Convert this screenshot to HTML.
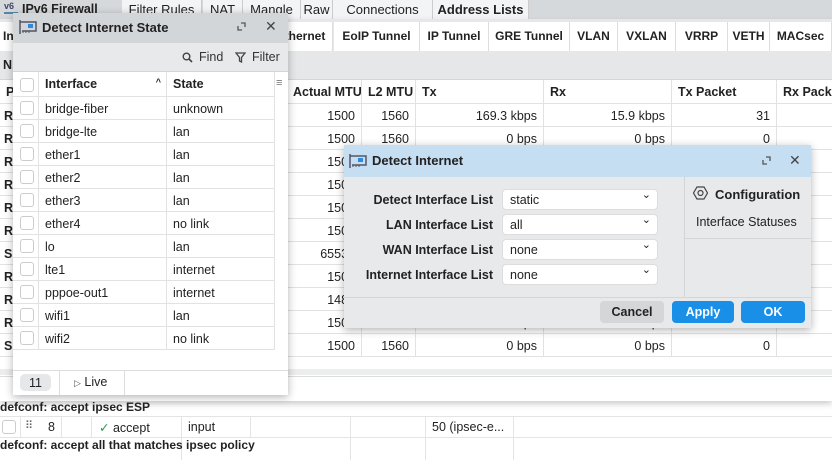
<!DOCTYPE html>
<html><head><meta charset="utf-8"><style>
*{box-sizing:border-box;margin:0;padding:0}
body{width:832px;height:460px;overflow:hidden;background:#fff;font-family:"Liberation Sans",sans-serif;font-size:12.5px;color:#222;position:relative}
.a{position:absolute}
.tab{position:absolute;top:0;height:19px;background:#f3f4f5;border-right:1px solid #ccc;padding:2px 0 0 0;text-align:center;font-size:13px}
.t2{position:absolute;top:22px;height:29px;background:#fff;border-right:1px solid #ddd;text-align:center;padding-top:7px;font-weight:bold;font-size:12px}
.cell{position:absolute;height:23px;border-right:1px solid #e2e2e2;border-bottom:1px solid #e2e2e2;padding:5px 6px 0;text-align:right;white-space:nowrap;overflow:hidden}
.hd{font-weight:bold;text-align:left;background:#fff;height:24px}
.cb{position:absolute;width:14px;height:14px;border:1px solid #ccc;border-radius:3px;background:#fff}
.sel{position:absolute;left:502px;width:156px;height:21px;background:#fff;border:1px solid #ddd;border-radius:4px;padding:3px 7px;font-size:12.5px}
.sel:after{content:"⌄";position:absolute;right:6px;top:-2px;font-size:11px}
.lbl{position:absolute;right:339px;font-weight:bold;font-size:12.5px;text-align:right}
.btn{position:absolute;top:301px;height:22px;border-radius:4px;font-weight:bold;text-align:center;padding-top:4px;font-size:12.5px}
</style></head><body>
<div class="a" style="left:0;top:0;width:832px;height:19px;background:#d6d9dc"></div>
<div class="a" style="left:4px;top:1px;font-size:9px;font-weight:bold;color:#446">v6</div>
<div class="a" style="left:4px;top:12px;width:14px;height:2px;background:#58a"></div>
<div class="a" style="left:22px;top:2px;font-weight:bold">IPv6 Firewall</div>
<div class="tab" style="left:122px;width:80px">Filter Rules</div>
<div class="tab" style="left:203px;width:40px">NAT</div>
<div class="tab" style="left:243px;width:58px">Mangle</div>
<div class="tab" style="left:301px;width:32px">Raw</div>
<div class="tab" style="left:333px;width:100px">Connections</div>
<div class="tab" style="left:433px;width:96px;font-weight:bold">Address Lists</div>
<div class="a" style="left:0;top:19px;width:832px;height:382px;background:#fff;box-shadow:0 3px 6px rgba(0,0,0,.2)"></div>
<div class="a" style="left:0;top:19px;width:832px;height:33px;background:#e6e7e9"></div>
<div class="t2" style="left:0;width:20px;text-align:left;padding-left:3px">In</div>
<div class="t2" style="left:270px;width:63px">Ethernet</div>
<div class="t2" style="left:334px;width:86px">EoIP Tunnel</div>
<div class="t2" style="left:420px;width:69px">IP Tunnel</div>
<div class="t2" style="left:489px;width:81px">GRE Tunnel</div>
<div class="t2" style="left:570px;width:48px">VLAN</div>
<div class="t2" style="left:618px;width:58px">VXLAN</div>
<div class="t2" style="left:676px;width:52px">VRRP</div>
<div class="t2" style="left:728px;width:42px">VETH</div>
<div class="t2" style="left:770px;width:62px">MACsec</div>
<div class="a" style="left:0;top:51px;width:832px;height:29px;background:#e6e7e9;border-bottom:1px solid #d5d5d5"></div>
<div class="a" style="left:3px;top:58px;font-weight:bold">N</div>
<div class="cell hd" style="left:0;top:80px;width:288px">P</div>
<div class="cell hd" style="left:288px;top:80px;width:74px;padding-left:5px">Actual MTU</div>
<div class="cell hd" style="left:362px;top:80px;width:54px">L2 MTU</div>
<div class="cell hd" style="left:416px;top:80px;width:128px">Tx</div>
<div class="cell hd" style="left:544px;top:80px;width:128px">Rx</div>
<div class="cell hd" style="left:672px;top:80px;width:105px">Tx Packet</div>
<div class="cell hd" style="left:777px;top:80px;width:60px">Rx Packet</div>
<div id="rows"></div>
<div class="a" style="left:0;top:369px;width:832px;height:6px;background:#eceded"></div>
<div class="a" style="left:0;top:376px;width:832px;height:1px;background:#ddd"></div>
<div class="a" style="left:0;top:400px;font-weight:bold;font-size:12px">defconf: accept ipsec ESP</div>
<div class="a" style="left:0;top:416px;width:832px;height:22px;border-top:1px solid #e4e4e4;border-bottom:1px solid #e4e4e4"></div>
<div class="cb" style="left:2px;top:420px"></div>
<div class="a" style="left:20px;top:416px;width:1px;height:22px;background:#e4e4e4"></div>
<div class="a" style="left:25px;top:419px;font-size:11px;color:#666">⠿</div>
<div class="a" style="left:48px;top:420px">8</div>
<div class="a" style="left:61px;top:416px;width:1px;height:22px;background:#e4e4e4"></div>
<div class="a" style="left:91px;top:416px;width:1px;height:22px;background:#e4e4e4"></div>
<div class="a" style="left:99px;top:420px"><span style="color:#2a9a4a">✓</span> accept</div>
<div class="a" style="left:181px;top:416px;width:1px;height:44px;background:#e4e4e4"></div>
<div class="a" style="left:188px;top:420px">input</div>
<div class="a" style="left:250px;top:416px;width:1px;height:22px;background:#e4e4e4"></div>
<div class="a" style="left:350px;top:416px;width:1px;height:44px;background:#e4e4e4"></div>
<div class="a" style="left:425px;top:416px;width:1px;height:44px;background:#e4e4e4"></div>
<div class="a" style="left:432px;top:420px">50 (ipsec-e...</div>
<div class="a" style="left:513px;top:416px;width:1px;height:44px;background:#e4e4e4"></div>
<div class="a" style="left:0;top:438px;font-weight:bold;font-size:12px">defconf: accept all that matches ipsec policy</div>

<div class="a" style="left:13px;top:13px;width:275px;height:382px;background:#fff;box-shadow:0 2px 8px rgba(0,0,0,.3)"></div>
<div class="a" style="left:13px;top:13px;width:275px;height:30px;background:#d3d6d9"></div>
<svg class="a" style="left:19px;top:19px" width="18" height="16" viewBox="0 0 18 16"><path d="M1 1v14M1 3h16v9H3" fill="none" stroke="#556" stroke-width="1.5"/><rect x="9" y="5" width="5" height="4" fill="#2a8be0"/><path d="M4 12v2M7 12v2M10 12v2" stroke="#556"/></svg>
<div class="a" style="left:42px;top:20px;font-weight:bold;font-size:13px">Detect Internet State</div>
<svg class="a" style="left:237px;top:22px" width="9" height="9" viewBox="0 0 9 9"><path d="M1 4V8h4M4 1h4v4" fill="none" stroke="#555" stroke-width="1.3"/></svg>
<div class="a" style="left:265px;top:18px;font-size:14px;color:#444">✕</div>
<div class="a" style="left:13px;top:43px;width:275px;height:29px;background:#e8e9eb;border-bottom:1px solid #d5d5d5"></div>
<svg class="a" style="left:182px;top:52px" width="11" height="11" viewBox="0 0 11 11"><circle cx="4.5" cy="4.5" r="3.3" fill="none" stroke="#444" stroke-width="1.4"/><path d="M7 7l3 3" stroke="#444" stroke-width="1.6"/></svg>
<div class="a" style="left:199px;top:50px;color:#333">Find</div>
<svg class="a" style="left:235px;top:52px" width="11" height="11" viewBox="0 0 11 11"><path d="M1 1h9L6.5 5.5V10L4.5 9V5.5z" fill="none" stroke="#444" stroke-width="1.3"/></svg>
<div class="a" style="left:252px;top:50px;color:#333">Filter</div>
<div class="cell hd" style="left:13px;top:72px;width:26px;height:25px"></div>
<div class="cb" style="left:20px;top:78px"></div>
<div class="cell hd" style="left:39px;top:72px;width:128px;height:25px">Interface<span style="position:absolute;right:5px;font-size:9px">^</span></div>
<div class="cell hd" style="left:167px;top:72px;width:108px;height:25px">State</div>
<div class="a" style="left:276px;top:77px;font-size:11px;color:#777">≡</div>
<div id="irows"></div>
<div class="a" style="left:13px;top:370px;width:275px;height:1px;background:#ddd"></div>
<div class="a" style="left:20px;top:374px;width:31px;height:17px;background:#e6e7e9;border-radius:5px;text-align:center;padding-top:2px">11</div>
<div class="a" style="left:59px;top:370px;width:1px;height:25px;background:#ddd"></div>
<div class="a" style="left:124px;top:370px;width:1px;height:25px;background:#ddd"></div>
<div class="a" style="left:74px;top:375px"><span style="font-size:9px;color:#555">▷</span> Live</div>

<div class="a" style="left:344px;top:145px;width:467px;height:183px;background:#e8e9eb;box-shadow:0 2px 8px rgba(0,0,0,.3)"></div>
<div class="a" style="left:344px;top:145px;width:467px;height:32px;background:#c5def2"></div>
<svg class="a" style="left:349px;top:153px" width="18" height="16" viewBox="0 0 18 16"><path d="M1 1v14M1 3h16v9H3" fill="none" stroke="#556" stroke-width="1.5"/><rect x="9" y="5" width="5" height="4" fill="#2a8be0"/><path d="M4 12v2M7 12v2M10 12v2" stroke="#556"/></svg>
<div class="a" style="left:372px;top:153px;font-weight:bold;font-size:13px">Detect Internet</div>
<svg class="a" style="left:762px;top:156px" width="9" height="9" viewBox="0 0 9 9"><path d="M1 4V8h4M4 1h4v4" fill="none" stroke="#555" stroke-width="1.3"/></svg>
<div class="a" style="left:789px;top:152px;font-size:14px;color:#444">✕</div>
<div class="lbl" style="top:193px">Detect Interface List</div>
<div class="lbl" style="top:218px">LAN Interface List</div>
<div class="lbl" style="top:243px">WAN Interface List</div>
<div class="lbl" style="top:268px">Internet Interface List</div>
<div class="sel" style="top:189px">static</div>
<div class="sel" style="top:214px">all</div>
<div class="sel" style="top:239px">none</div>
<div class="sel" style="top:264px">none</div>
<div class="a" style="left:684px;top:177px;width:1px;height:120px;background:#d5d5d5"></div>
<div class="a" style="left:685px;top:238px;width:126px;height:1px;background:#d5d5d5"></div>
<svg class="a" style="left:693px;top:186px" width="15" height="14" viewBox="0 0 15 14"><path d="M4 1h7l3.5 6-3.5 6H4L.5 7z" fill="none" stroke="#444" stroke-width="1.2"/><circle cx="7.5" cy="7" r="2.5" fill="none" stroke="#444" stroke-width="1.2"/></svg>
<div class="a" style="left:715px;top:187px;font-weight:bold;font-size:13px">Configuration</div>
<div class="a" style="left:696px;top:215px">Interface Statuses</div>
<div class="a" style="left:344px;top:297px;width:467px;height:1px;background:#d5d5d5"></div>
<div class="btn" style="left:600px;width:64px;background:#d5d6d8;color:#222">Cancel</div>
<div class="btn" style="left:672px;width:62px;background:#1a8fe8;color:#fff">Apply</div>
<div class="btn" style="left:741px;width:64px;background:#1a8fe8;color:#fff">OK</div>

<script>
var L=["R","R","R","R","R","R","S","R","R","R","S"];
var M=["1500","1500","1500","1500","1500","1500","65535","1500","1480","1500","1500"];
var h="";
for(var i=0;i<11;i++){var y=104+i*23;var tx=i==0?"169.3 kbps":"0 bps",rx=i==0?"15.9 kbps":"0 bps",tp=i==0?"31":"0";
h+='<div class="cell" style="left:0;top:'+y+'px;width:288px;text-align:left;font-weight:bold;padding-left:4px">'+L[i]+'</div>'+
'<div class="cell" style="left:288px;top:'+y+'px;width:74px">'+M[i]+'</div>'+
'<div class="cell" style="left:362px;top:'+y+'px;width:54px">1560</div>'+
'<div class="cell" style="left:416px;top:'+y+'px;width:128px">'+tx+'</div>'+
'<div class="cell" style="left:544px;top:'+y+'px;width:128px">'+rx+'</div>'+
'<div class="cell" style="left:672px;top:'+y+'px;width:105px">'+tp+'</div>'+
'<div class="cell" style="left:777px;top:'+y+'px;width:60px"></div>';}
document.getElementById("rows").outerHTML=h;
var N=["bridge-fiber","bridge-lte","ether1","ether2","ether3","ether4","lo","lte1","pppoe-out1","wifi1","wifi2"];
var S=["unknown","lan","lan","lan","lan","no link","lan","internet","internet","lan","no link"];
h="";
for(var i=0;i<11;i++){var y=97+i*23;
h+='<div class="cell" style="left:13px;top:'+y+'px;width:26px"></div><div class="cb" style="left:20px;top:'+(y+4)+'px"></div>'+
'<div class="cell" style="left:39px;top:'+y+'px;width:128px;text-align:left">'+N[i]+'</div>'+
'<div class="cell" style="left:167px;top:'+y+'px;width:108px;text-align:left">'+S[i]+'</div>';}
document.getElementById("irows").outerHTML=h;
</script>
</body></html>
